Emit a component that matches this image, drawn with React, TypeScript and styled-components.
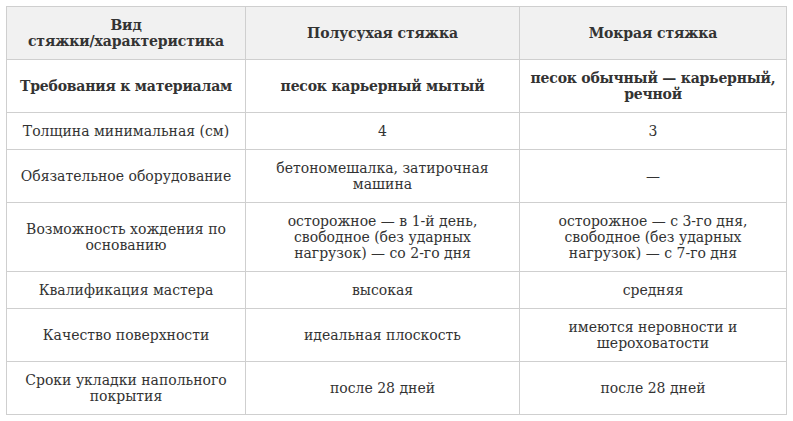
import React from "react";
import styled, { createGlobalStyle } from "styled-components";

const GlobalStyle = createGlobalStyle`
  body {
    margin: 0;
    background: #ffffff;
    font-family: "DejaVu Serif", "Liberation Serif", serif;
    color: #333333;
  }
`;

const Page = styled.div`
  padding: 6px 0 0 6px;
`;

const Table = styled.table`
  width: 780px;
  border-collapse: collapse;
  table-layout: fixed;
  font-size: 14px;
  line-height: 16px;
`;

const HeadRow = styled.tr`
  background: #f1f1f1;
`;

const Cell = styled.td<{ $bold?: boolean }>`
  border: 1px solid #cfcfcf;
  padding: 10px 10px;
  text-align: center;
  vertical-align: middle;
  font-weight: ${(p) => (p.$bold ? 700 : 400)};
  letter-spacing: ${(p) => (p.$bold ? "-0.2px" : "0")};
`;

const HeadCell = styled(Cell).attrs({ as: "th" })`
  font-weight: 700;
  letter-spacing: -0.1px;
`;

const NoWrap = styled.span`
  white-space: nowrap;
`;

const rows: [string, string, string][] = [
  ["Толщина минимальная (см)", "4", "3"],
  ["Обязательное оборудование", "бетономешалка, затирочная машина", "—"],
  [
    "Возможность хождения по основанию",
    "осторожное — в 1-й день, свободное (без ударных нагрузок) — со 2-го дня",
    "осторожное — с 3-го дня, свободное (без ударных нагрузок) — с 7-го дня",
  ],
  ["Квалификация мастера", "высокая", "средняя"],
  ["Качество поверхности", "идеальная плоскость", "имеются неровности и шероховатости"],
  ["Сроки укладки напольного покрытия", "после 28 дней", "после 28 дней"],
];

export default function App() {
  return (
    <>
      <GlobalStyle />
      <Page>
        <Table>
          <colgroup>
            <col style={{ width: 239 }} />
            <col style={{ width: 274 }} />
            <col style={{ width: 267 }} />
          </colgroup>
          <thead>
            <HeadRow>
              <HeadCell>
                Вид <NoWrap>стяжки/характеристика</NoWrap>
              </HeadCell>
              <HeadCell>Полусухая стяжка</HeadCell>
              <HeadCell>Мокрая стяжка</HeadCell>
            </HeadRow>
          </thead>
          <tbody>
            <tr>
              <Cell $bold>Требования к материалам</Cell>
              <Cell $bold>песок карьерный мытый</Cell>
              <Cell $bold>
                <NoWrap>песок обычный — карьерный,</NoWrap> речной
              </Cell>
            </tr>
            {rows.map((r) => (
              <tr key={r[0]}>
                <Cell>{r[0]}</Cell>
                <Cell>{r[1]}</Cell>
                <Cell>{r[2]}</Cell>
              </tr>
            ))}
          </tbody>
        </Table>
      </Page>
    </>
  );
}
